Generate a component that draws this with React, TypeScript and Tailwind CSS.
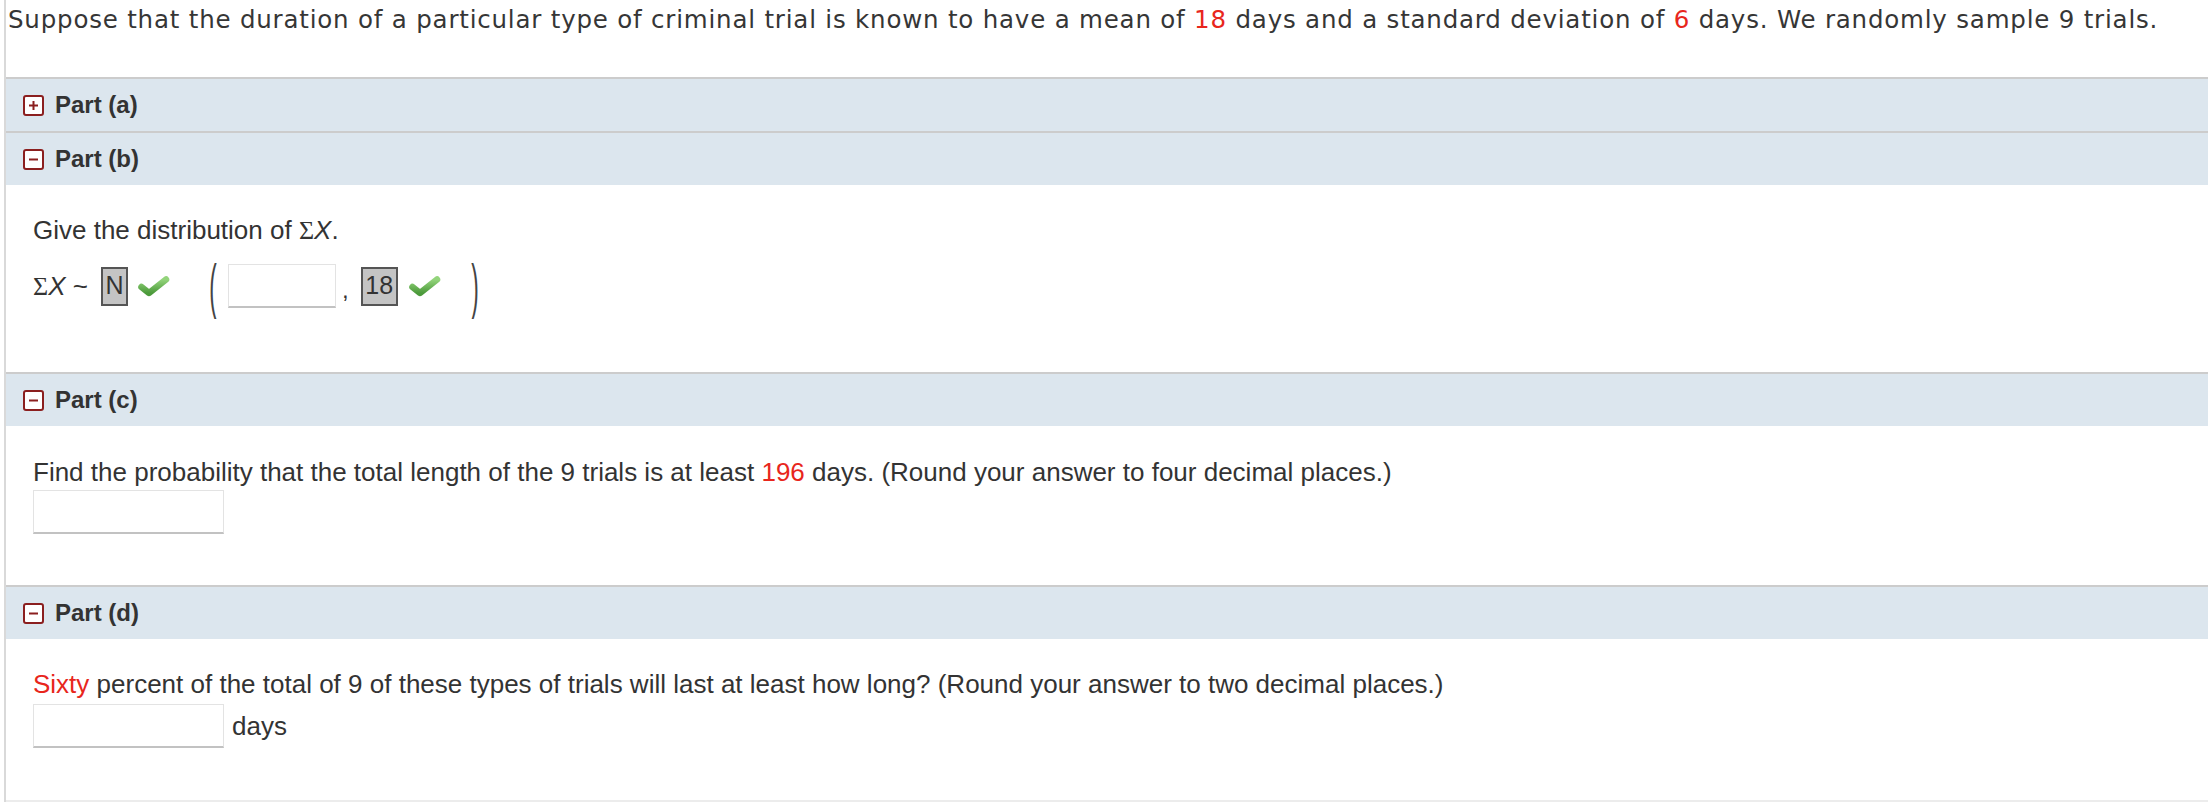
import React from "react";

const red = "text-[#e8261c]";

function Check() {
  return (
    <svg width="33" height="22" viewBox="0 0 33 22" className="shrink-0">
      <defs>
        <linearGradient id="ck" x1="0" y1="0" x2="0" y2="1">
          <stop offset="0" stopColor="#93d47b" />
          <stop offset="1" stopColor="#4c9a3b" />
        </linearGradient>
      </defs>
      <path
        d="M4.5 12 L12 18 L29 4.5"
        fill="none"
        stroke="url(#ck)"
        strokeWidth="6.5"
        strokeLinecap="round"
        strokeLinejoin="round"
      />
    </svg>
  );
}

function ToggleIcon({ open }: { open: boolean }) {
  return (
    <span className="flex h-[21px] w-[21px] items-center justify-center rounded-[3px] border-2 border-[#8b1f1f] bg-white">
      <svg width="13" height="13" viewBox="0 0 13 13">
        <rect x="2" y="5.5" width="9" height="2" fill="#8b1f1f" />
        {!open && <rect x="5.5" y="2" width="2" height="9" fill="#8b1f1f" />}
      </svg>
    </span>
  );
}

function PartHeader({ label, open }: { label: string; open: boolean }) {
  return (
    <div className="flex h-[54px] shrink-0 items-center gap-[11px] border-t-2 border-[#cccccc] bg-[#dce6ee] pl-[17px] text-[24px] font-bold text-[#333]">
      <ToggleIcon open={open} />
      <span>{label}</span>
    </div>
  );
}

function AnswerBox({ w }: { w: string }) {
  return (
    <span
      className={`inline-block h-[44px] shrink-0 ${w} border border-b-2 border-[#e3e3e3] border-b-[#c2c2c2] bg-white`}
    />
  );
}

function Graded({ value, w }: { value: string; w: string }) {
  return (
    <span
      className={`flex h-[39px] shrink-0 ${w} items-center justify-center border-2 border-[#555] bg-[#c4c4c4] text-[25px] text-[#333]`}
    >
      {value}
    </span>
  );
}

function Paren({ ch }: { ch: string }) {
  return (
    <span className="inline-block scale-x-[0.75] scale-y-[2.05] text-[30px] leading-none text-[#444]">
      {ch}
    </span>
  );
}

function SumX() {
  return (
    <span>
      <span className="font-['Liberation_Serif',serif]">Σ</span>
      <span className="italic">X</span>
    </span>
  );
}

export default function App() {
  return (
    <div className="h-[802px] w-full bg-white pl-1 font-['Liberation_Sans',Arial,sans-serif] text-[#333]">
      <div className="flex h-full flex-col border-l-2 border-[#d9d9d9]">
        {/* problem stem */}
        <div className="h-[77px] shrink-0 pl-[2px] pt-[2px] font-['DejaVu_Sans',Verdana,sans-serif] text-[24.5px] tracking-[0.8px] whitespace-nowrap text-[#363636]">
          Suppose that the duration of a particular type of criminal trial is known to have a mean of{" "}
          <span className={red}>18</span> days and a standard deviation of <span className={red}>6</span> days. We
          randomly sample 9 trials.
        </div>

        <PartHeader label="Part (a)" open={false} />
        <PartHeader label="Part (b)" open={true} />
        <div className="h-[187px] shrink-0 pl-[27px] pt-[30px] text-[26px]">
          <div className="leading-[30px]">
            Give the distribution of <SumX />.
          </div>
          <div className="mt-[12px] flex h-[56px] items-center">
            <span className="w-[68px] shrink-0">
              <SumX /> ~
            </span>
            <Graded value="N" w="w-[27px]" />
            <span className="ml-[9px]">
              <Check />
            </span>
            <span className="ml-[36px] mr-[8px] flex w-[14px] justify-center">
              <Paren ch="(" />
            </span>
            <AnswerBox w="w-[108px]" />
            <span className="ml-[6px] mr-[12px] self-end pb-[6px] text-[24px]">,</span>
            <Graded value="18" w="w-[37px]" />
            <span className="ml-[10px]">
              <Check />
            </span>
            <span className="ml-[27px] flex w-[14px] justify-center">
              <Paren ch=")" />
            </span>
          </div>
        </div>

        <PartHeader label="Part (c)" open={true} />
        <div className="h-[159px] shrink-0 pl-[27px] pt-[31px] text-[26px]">
          <div className="leading-[30px]">
            Find the probability that the total length of the 9 trials is at least <span className={red}>196</span>{" "}
            days. (Round your answer to four decimal places.)
          </div>
          <div className="mt-[3px] flex">
            <AnswerBox w="w-[191px]" />
          </div>
        </div>

        <PartHeader label="Part (d)" open={true} />
        <div className="flex-1 border-b-2 border-[#ececec] pl-[27px] pt-[30px] text-[26px]">
          <div className="leading-[30px]">
            <span className={red}>Sixty</span> percent of the total of 9 of these types of trials will last at least
            how long? (Round your answer to two decimal places.)
          </div>
          <div className="mt-[5px] flex items-center gap-[8px]">
            <AnswerBox w="w-[191px]" />
            <span>days</span>
          </div>
        </div>
      </div>
    </div>
  );
}
